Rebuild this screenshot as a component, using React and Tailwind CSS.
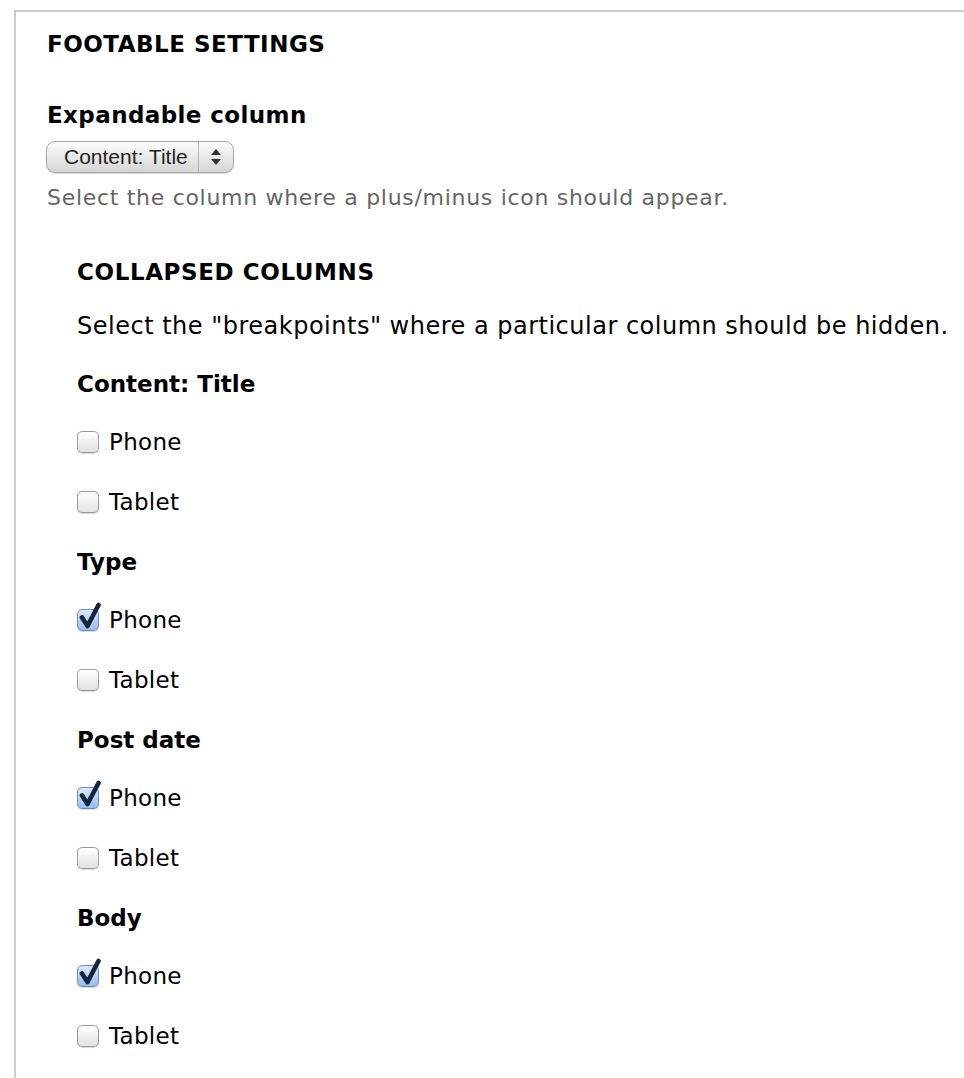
import React from 'react';

const columns = [
  { name: 'Content: Title', phone: false, tablet: false },
  { name: 'Type', phone: true, tablet: false },
  { name: 'Post date', phone: true, tablet: false },
  { name: 'Body', phone: true, tablet: false },
];

const Checkbox = ({ checked }) => (
  <span className="relative inline-block w-[22px] h-[22px] shrink-0">
    {checked ? (
      <span className="absolute inset-0 rounded-[5px] border border-[#6f8fb8] bg-gradient-to-b from-[#dbe9fb] to-[#93bdf0] shadow-[0_1px_1px_rgba(0,0,0,0.15)]" />
    ) : (
      <span className="absolute inset-0 rounded-[5px] border border-[#9a9a9a] bg-gradient-to-b from-[#ffffff] to-[#e2e2e2] shadow-[0_1px_1px_rgba(0,0,0,0.15)]" />
    )}
    {checked && (
      <svg className="absolute -top-[7px] left-[1px]" width="26" height="28" viewBox="0 0 26 28">
        <path d="M4 15.5 L9.5 24 L20.5 3" fill="none" stroke="#17243d" strokeWidth="4.6" strokeLinecap="round" strokeLinejoin="round" />
      </svg>
    )}
  </span>
);

const CheckRow = ({ label, checked }) => (
  <label className="flex items-center h-[30px] gap-[10px] text-[23px] tracking-[0.3px] text-black">
    <Checkbox checked={checked} />
    <span>{label}</span>
  </label>
);

export default function App() {
  return (
    <div className="min-h-screen bg-white pt-[10px] pl-[14px]" style={{ fontFamily: '"DejaVu Sans", Verdana, sans-serif' }}>
      <div className="min-h-[1068px] border-t-2 border-l-2 border-[#cccccc] pl-[31px]">
        <h2 className="mt-[17px] h-[30px] flex items-center text-[23px] tracking-[0.5px] font-bold text-black">FOOTABLE SETTINGS</h2>

        <div className="mt-[41px] h-[30px] flex items-center text-[23px] tracking-[0.4px] font-bold text-black">Expandable column</div>
        <div className="mt-[11px] flex -ml-px">
          <div
            className="flex items-center h-[32px] rounded-[9px] border border-[#a6a6a6] bg-gradient-to-b from-[#fdfdfd] via-[#e9e9e9] to-[#d6d6d6] shadow-[0_1px_1px_rgba(0,0,0,0.15)]"
            style={{ fontFamily: '"Liberation Sans", Arial, sans-serif' }}
          >
            <span className="pl-[17px] pr-[10px] text-[21px] text-[#222]">Content: Title</span>
            <span className="h-full w-px bg-[#b8b8b8]" />
            <svg className="mx-[11px]" width="12" height="18" viewBox="0 0 12 18">
              <path d="M6 1 L11 7 L1 7 Z" fill="#333" />
              <path d="M1 11 L11 11 L6 17 Z" fill="#333" />
            </svg>
          </div>
        </div>
        <p className="mt-[11px] h-[26px] flex items-center text-[22px] tracking-[0.7px] text-[#666666]">
          Select the column where a plus/minus icon should appear.
        </p>

        <div className="pl-[30px]">
          <h3 className="mt-[47px] h-[30px] flex items-center text-[23px] tracking-[0.6px] font-bold text-black">COLLAPSED COLUMNS</h3>
          <p className="mt-[24px] h-[30px] flex items-center text-[24px] tracking-[0.5px] text-black whitespace-nowrap">
            Select the "breakpoints" where a particular column should be hidden.
          </p>
          {columns.map((col, i) => (
            <div key={col.name} className={i === 0 ? 'mt-[28px]' : 'mt-[30px]'}>
              <div className="h-[30px] flex items-center text-[23px] font-bold text-black">{col.name}</div>
              <div className="mt-[28px]">
                <CheckRow label="Phone" checked={col.phone} />
              </div>
              <div className="mt-[30px]">
                <CheckRow label="Tablet" checked={col.tablet} />
              </div>
            </div>
          ))}
        </div>
      </div>
    </div>
  );
}
